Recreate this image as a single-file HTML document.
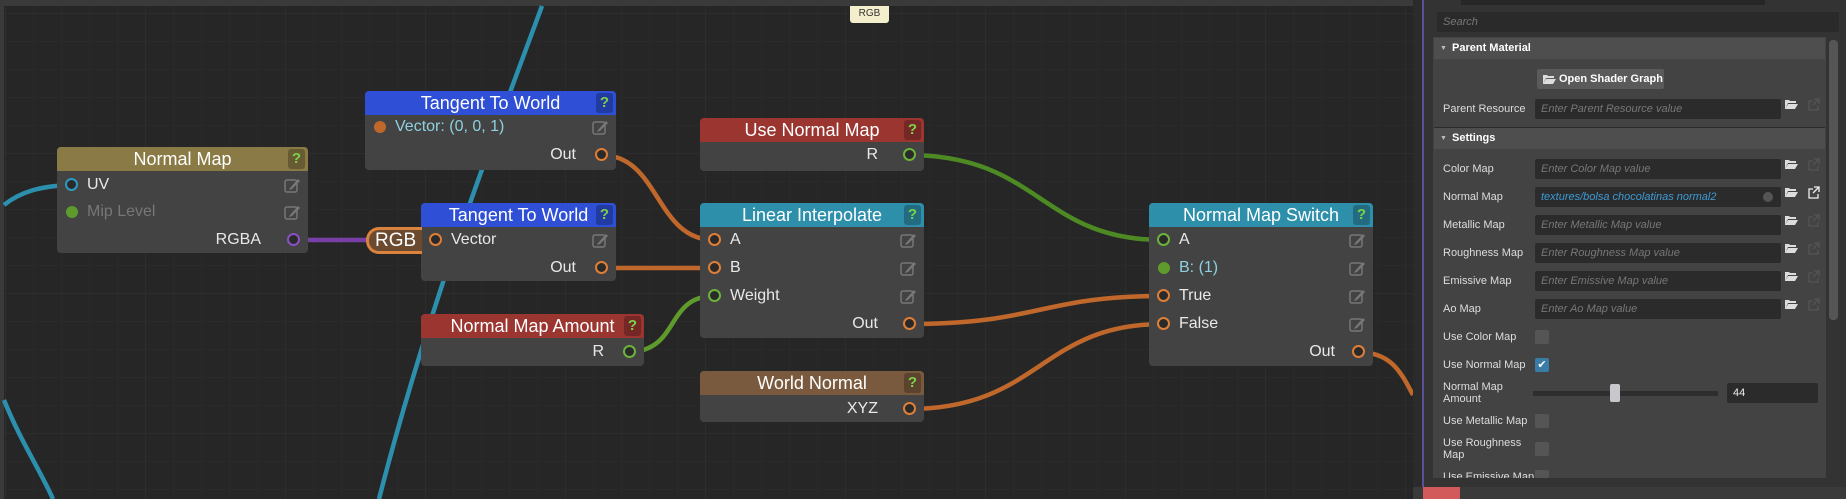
<!DOCTYPE html>
<html><head><meta charset="utf-8"><style>
*{box-sizing:border-box;margin:0;padding:0}
body{width:1846px;height:499px;overflow:hidden;background:#262626;font-family:"Liberation Sans",sans-serif;position:relative}
#canvas{position:absolute;left:0;top:0;width:1413px;height:499px;background-color:#262626;
background-image:linear-gradient(#2d2d2d 1px,transparent 1px),linear-gradient(90deg,#2d2d2d 1px,transparent 1px),linear-gradient(#2a2a2a 1px,transparent 1px),linear-gradient(90deg,#2a2a2a 1px,transparent 1px);
background-size:140px 140px,140px 140px,28px 28px,28px 28px;background-position:0 7px,1px 0,0 7px,1px 0;border-top:6px solid #3a3a3a;border-left:4px solid #3a3a3a}
svg.w{position:absolute;left:0;top:0}
.node{position:absolute;background:#434343;border-radius:4px;overflow:hidden;color:#e8e8e8;font-size:16px}
.hdr{height:24px;text-align:center;color:#fff;font-size:18px;line-height:24px;position:relative}
.q{position:absolute;right:3px;top:2px;width:17px;height:20px;background:rgba(0,0,0,.25);border-radius:3px;color:#7cd14a;font-size:15px;line-height:20px;text-align:center;font-weight:bold}
.row{position:absolute;left:0;right:0;height:24px;line-height:24px}
.pi{position:absolute;width:13px;height:13px;border-radius:50%;border:2.5px solid;background:#2a2a2a;top:5px}
.pf{position:absolute;width:12px;height:12px;border-radius:50%;top:6px}
.lbl{position:absolute;left:30px}
.out{position:absolute;right:36px}
.ed{position:absolute;right:8px;top:4px}
.lab{position:absolute;left:1443px;color:#ddd;font-size:11px}
.inp{position:absolute;left:1535px;width:246px;height:20px;background:#2b2b2b;border-radius:2px;color:#777;font-style:italic;font-size:11px;line-height:20px;padding-left:6px}
.cb{position:absolute;left:1535px;width:14px;height:14px;background:#555;border-radius:2px}
</style></head><body>
<div id="canvas"></div>
<svg class="w" width="1413" height="499">
<g fill="none" stroke-width="4.5">
<path d="M542 6 C500 120 430 300 379 499" stroke="#2c8fae"/>
<path d="M71 185 C40 186 20 192 4 205" stroke="#2c8fae"/>
<path d="M4 400 C20 440 40 470 53 499" stroke="#2c8fae"/>
<path d="M301 240 L370 240" stroke="#7a3fa6"/>
<path d="M601 155 C660 155 655 240 714 240" stroke="#c0682b"/>
<path d="M601 268 L714 268" stroke="#c0682b"/>
<path d="M628 352 C680 352 665 296 714 296" stroke="#5e9a2c"/>
<path d="M908 155 C1040 155 1040 240 1163 240" stroke="#4e8a23"/>
<path d="M908 324 C1040 324 1040 296 1163 296" stroke="#c0682b"/>
<path d="M908 409 C1040 409 1040 324 1163 324" stroke="#c0682b"/>
<path d="M1357 352 C1390 352 1400 370 1413 395" stroke="#c0682b"/>
</g></svg>

<div style="position:absolute;left:850px;top:6px;width:39px;height:17px;background:#f3eecb;border-radius:0 0 3px 3px;font-size:10px;color:#333;text-align:center;line-height:16px">RGB</div>

<div class="node" style="left:57px;top:147px;width:251px;height:106px">
<div class="hdr" style="background:#8a7a45">Normal Map<div class="q">?</div></div>
<div class="row" style="top:26px"><div class="pi" style="left:8px;border-color:#2c9bc0"></div><span class="lbl">UV</span><svg class="ed" width="16" height="16"><rect x="1" y="3" width="12" height="12" rx="2" fill="none" stroke="#777" stroke-width="1.5"/><path d="M6 11 L14 2 L16 4 L8 12 L5 13Z" fill="#777"/></svg></div>
<div class="row" style="top:53px;color:#777"><div class="pf" style="left:9px;background:#5e9a2c"></div><span class="lbl">Mip Level</span><svg class="ed" width="16" height="16"><rect x="1" y="3" width="12" height="12" rx="2" fill="none" stroke="#777" stroke-width="1.5"/><path d="M6 11 L14 2 L16 4 L8 12 L5 13Z" fill="#777"/></svg></div>
<div class="row" style="top:81px"><span class="out" style="right:47px">RGBA</span><div class="pi" style="right:8px;border-color:#8a4fc6"></div></div>
</div>

<div class="node" style="left:365px;top:91px;width:251px;height:79px">
<div class="hdr" style="background:#2e4fd6">Tangent To World<div class="q">?</div></div>
<div class="row" style="top:24px"><div class="pf" style="left:9px;background:#c0682b"></div><span class="lbl" style="color:#8fd0e0">Vector: (0, 0, 1)</span><svg class="ed" width="16" height="16"><rect x="1" y="3" width="12" height="12" rx="2" fill="none" stroke="#777" stroke-width="1.5"/><path d="M6 11 L14 2 L16 4 L8 12 L5 13Z" fill="#777"/></svg></div>
<div class="row" style="top:52px"><span class="out" style="right:40px">Out</span><div class="pi" style="right:8px;border-color:#e07e35"></div></div>
</div>

<div class="node" style="left:421px;top:203px;width:195px;height:78px">
<div class="hdr" style="background:#2e4fd6">Tangent To World<div class="q">?</div></div>
<div class="row" style="top:25px"><div class="pi" style="left:8px;border-color:#e07e35"></div><span class="lbl">Vector</span><svg class="ed" width="16" height="16"><rect x="1" y="3" width="12" height="12" rx="2" fill="none" stroke="#777" stroke-width="1.5"/><path d="M6 11 L14 2 L16 4 L8 12 L5 13Z" fill="#777"/></svg></div>
<div class="row" style="top:53px"><span class="out" style="right:40px">Out</span><div class="pi" style="right:8px;border-color:#e07e35"></div></div>
</div>
<div style="position:absolute;left:366px;top:227px;width:56px;height:27px;background:#6b4a30;border:3px solid #d9833f;border-right:none;border-radius:13px 0 0 13px;color:#fff;font-size:19px;line-height:21px;padding-left:6px">RGB</div>

<div class="node" style="left:421px;top:314px;width:223px;height:52px">
<div class="hdr" style="background:#9b3530">Normal Map Amount<div class="q">?</div></div>
<div class="row" style="top:26px"><span class="out" style="right:40px">R</span><div class="pi" style="right:8px;border-color:#6cb33a"></div></div>
</div>

<div class="node" style="left:700px;top:118px;width:224px;height:53px">
<div class="hdr" style="background:#9b3530">Use Normal Map<div class="q">?</div></div>
<div class="row" style="top:25px"><span class="out" style="right:46px">R</span><div class="pi" style="right:8px;border-color:#6cb33a"></div></div>
</div>

<div class="node" style="left:700px;top:203px;width:224px;height:135px">
<div class="hdr" style="background:#2e8fab">Linear Interpolate<div class="q">?</div></div>
<div class="row" style="top:25px"><div class="pi" style="left:8px;border-color:#e07e35"></div><span class="lbl">A</span><svg class="ed" width="16" height="16"><rect x="1" y="3" width="12" height="12" rx="2" fill="none" stroke="#777" stroke-width="1.5"/><path d="M6 11 L14 2 L16 4 L8 12 L5 13Z" fill="#777"/></svg></div>
<div class="row" style="top:53px"><div class="pi" style="left:8px;border-color:#e07e35"></div><span class="lbl">B</span><svg class="ed" width="16" height="16"><rect x="1" y="3" width="12" height="12" rx="2" fill="none" stroke="#777" stroke-width="1.5"/><path d="M6 11 L14 2 L16 4 L8 12 L5 13Z" fill="#777"/></svg></div>
<div class="row" style="top:81px"><div class="pi" style="left:8px;border-color:#6cb33a"></div><span class="lbl">Weight</span><svg class="ed" width="16" height="16"><rect x="1" y="3" width="12" height="12" rx="2" fill="none" stroke="#777" stroke-width="1.5"/><path d="M6 11 L14 2 L16 4 L8 12 L5 13Z" fill="#777"/></svg></div>
<div class="row" style="top:109px"><span class="out" style="right:46px">Out</span><div class="pi" style="right:8px;border-color:#e07e35"></div></div>
</div>

<div class="node" style="left:700px;top:371px;width:224px;height:51px">
<div class="hdr" style="background:#7a5a3e">World Normal<div class="q">?</div></div>
<div class="row" style="top:26px"><span class="out" style="right:46px">XYZ</span><div class="pi" style="right:8px;border-color:#e07e35"></div></div>
</div>

<div class="node" style="left:1149px;top:203px;width:224px;height:163px">
<div class="hdr" style="background:#2e8fab">Normal Map Switch<div class="q">?</div></div>
<div class="row" style="top:25px"><div class="pi" style="left:8px;border-color:#6cb33a"></div><span class="lbl">A</span><svg class="ed" width="16" height="16"><rect x="1" y="3" width="12" height="12" rx="2" fill="none" stroke="#777" stroke-width="1.5"/><path d="M6 11 L14 2 L16 4 L8 12 L5 13Z" fill="#777"/></svg></div>
<div class="row" style="top:53px"><div class="pf" style="left:9px;background:#5e9a2c"></div><span class="lbl" style="color:#8fd0e0">B: (1)</span><svg class="ed" width="16" height="16"><rect x="1" y="3" width="12" height="12" rx="2" fill="none" stroke="#777" stroke-width="1.5"/><path d="M6 11 L14 2 L16 4 L8 12 L5 13Z" fill="#777"/></svg></div>
<div class="row" style="top:81px"><div class="pi" style="left:8px;border-color:#e07e35"></div><span class="lbl">True</span><svg class="ed" width="16" height="16"><rect x="1" y="3" width="12" height="12" rx="2" fill="none" stroke="#777" stroke-width="1.5"/><path d="M6 11 L14 2 L16 4 L8 12 L5 13Z" fill="#777"/></svg></div>
<div class="row" style="top:109px"><div class="pi" style="left:8px;border-color:#e07e35"></div><span class="lbl">False</span><svg class="ed" width="16" height="16"><rect x="1" y="3" width="12" height="12" rx="2" fill="none" stroke="#777" stroke-width="1.5"/><path d="M6 11 L14 2 L16 4 L8 12 L5 13Z" fill="#777"/></svg></div>
<div class="row" style="top:137px"><span class="out" style="right:38px">Out</span><div class="pi" style="right:8px;border-color:#e07e35"></div></div>
</div>

<div style="position:absolute;left:1413px;top:0;width:10px;height:499px;background:#2b2b2b"></div>
<div style="position:absolute;left:1422px;top:0;width:2px;height:487px;background:#5b4f9a"></div>
<div style="position:absolute;left:1424px;top:0;width:422px;height:487px;background:#333"></div>
<div style="position:absolute;left:1461px;top:0;width:304px;height:5px;background:#262626"></div>
<div style="position:absolute;left:1437px;top:12px;width:402px;height:20px;background:#2a2a2a;border-radius:2px;color:#777;font-style:italic;font-size:11px;line-height:20px;padding-left:6px">Search</div>
<div style="position:absolute;left:1433px;top:37px;width:393px;height:441px;background:#434343"></div>
<div style="position:absolute;left:1829px;top:40px;width:9px;height:280px;background:#555;border-radius:4px"></div>
<div style="position:absolute;left:1434px;top:38px;width:391px;height:21px;background:#4e4e4e;color:#fff;font-size:11px;font-weight:bold;line-height:21px;padding-left:18px">Parent Material<span style="position:absolute;left:6px;font-size:7px;color:#bbb">▼</span></div>
<div style="position:absolute;left:1537px;top:69px;width:127px;height:20px;background:#5a5a5a;border-radius:2px;color:#fff;font-size:11px;font-weight:bold;line-height:20px;padding-left:22px"><svg style="position:absolute;left:6px;top:5px" width="13" height="10"><path d="M0 1h4l1 1h6v2H3L0 10Z M3 5h10l-3 5H0Z" fill="#ddd"/></svg>Open Shader Graph</div>
<div class="lab" style="top:103px">Parent Resource</div>
<div class="inp" style="top:99px">Enter Parent Resource value</div>
<div style="position:absolute;left:1434px;top:127px;width:391px;height:1px;background:#2b2b2b"></div>
<div style="position:absolute;left:1434px;top:128px;width:391px;height:21px;background:#4e4e4e;color:#fff;font-size:11px;font-weight:bold;line-height:21px;padding-left:18px">Settings<span style="position:absolute;left:6px;font-size:7px;color:#bbb">▼</span></div>

<div class="lab" style="top:163px">Color Map</div><div class="inp" style="top:159px">Enter Color Map value</div>
<div class="lab" style="top:191px">Normal Map</div><div class="inp" style="top:187px;color:#3c9bd6">textures/bolsa chocolatinas normal2<span style="position:absolute;right:8px;top:5px;width:10px;height:10px;border-radius:50%;background:#555"></span></div>
<div class="lab" style="top:219px">Metallic Map</div><div class="inp" style="top:215px">Enter Metallic Map value</div>
<div class="lab" style="top:247px">Roughness Map</div><div class="inp" style="top:243px">Enter Roughness Map value</div>
<div class="lab" style="top:275px">Emissive Map</div><div class="inp" style="top:271px">Enter Emissive Map value</div>
<div class="lab" style="top:303px">Ao Map</div><div class="inp" style="top:299px">Enter Ao Map value</div>
<svg style="position:absolute;left:1785px;top:95px" width="40" height="220">
<g fill="#ddd">
<path d="M0 5h4l1 1h6v2H3L0 14Z M3 9h10l-3 5H0Z"/>
<path d="M0 5h4l1 1h6v2H3L0 14Z M3 9h10l-3 5H0Z" transform="translate(0,60)"/>
<path d="M0 5h4l1 1h6v2H3L0 14Z M3 9h10l-3 5H0Z" transform="translate(0,88)"/>
<path d="M0 5h4l1 1h6v2H3L0 14Z M3 9h10l-3 5H0Z" transform="translate(0,116)"/>
<path d="M0 5h4l1 1h6v2H3L0 14Z M3 9h10l-3 5H0Z" transform="translate(0,144)"/>
<path d="M0 5h4l1 1h6v2H3L0 14Z M3 9h10l-3 5H0Z" transform="translate(0,172)"/>
<path d="M0 5h4l1 1h6v2H3L0 14Z M3 9h10l-3 5H0Z" transform="translate(0,200)"/>
</g>
<g fill="none" stroke="#555" stroke-width="1.3">
<path d="M28 6h-4v9h9v-4 M29 4h5v5 M34 4l-6 6"/>
<path d="M28 66h-4v9h9v-4 M29 64h5v5 M34 64l-6 6"/>
<path d="M28 122h-4v9h9v-4 M29 120h5v5 M34 120l-6 6"/>
<path d="M28 150h-4v9h9v-4 M29 148h5v5 M34 148l-6 6"/>
<path d="M28 178h-4v9h9v-4 M29 176h5v5 M34 176l-6 6"/>
<path d="M28 206h-4v9h9v-4 M29 204h5v5 M34 204l-6 6"/>
</g>
<path d="M28 94h-4v9h9v-4 M29 92h5v5 M34 92l-6 6" fill="none" stroke="#eee" stroke-width="1.3"/>
</svg>
<div class="lab" style="top:331px">Use Color Map</div><div class="cb" style="top:330px"></div>
<div class="lab" style="top:359px">Use Normal Map</div><div class="cb" style="top:358px;background:#3a7ca8;color:#fff;font-size:11px;line-height:14px;text-align:center">✔</div>
<div class="lab" style="top:381px;line-height:12px">Normal Map<br>Amount</div>
<div style="position:absolute;left:1533px;top:391px;width:185px;height:5px;background:#2e2e2e"></div>
<div style="position:absolute;left:1610px;top:384px;width:10px;height:18px;background:#c8c8cc;border-radius:2px"></div>
<div style="position:absolute;left:1727px;top:383px;width:91px;height:20px;background:#2b2b2b;border-radius:2px;color:#eee;font-size:11px;line-height:20px;padding-left:6px">44</div>
<div class="lab" style="top:415px">Use Metallic Map</div><div class="cb" style="top:414px"></div>
<div class="lab" style="top:437px;line-height:12px">Use Roughness<br>Map</div><div class="cb" style="top:442px"></div>
<div class="lab" style="top:471px;height:7px;overflow:hidden;line-height:12px">Use Emissive Map</div><div class="cb" style="top:470px;height:8px"></div>
<div style="position:absolute;left:1433px;top:478px;width:393px;height:9px;background:#333"></div>
<div style="position:absolute;left:1413px;top:487px;width:433px;height:12px;background:#3a3a3a"></div>
<div style="position:absolute;left:1423px;top:487px;width:37px;height:12px;background:#d35a5a"></div>
</body></html>
